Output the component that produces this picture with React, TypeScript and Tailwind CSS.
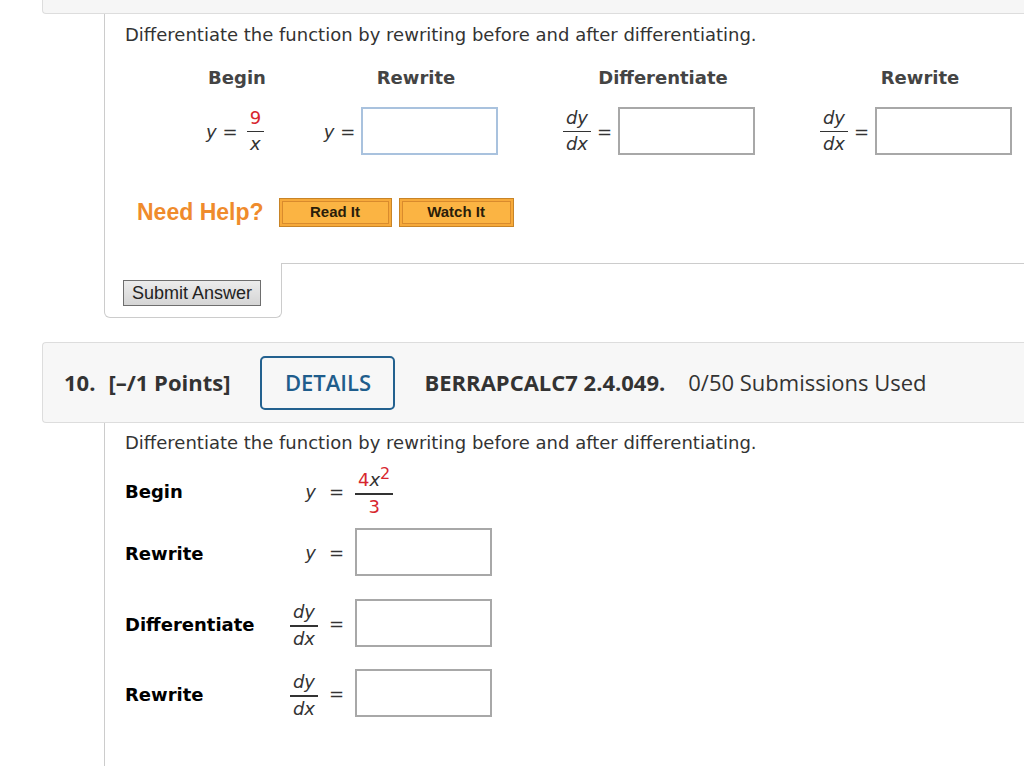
import React from 'react';

// 分数（分子・分母）
function Frac({ num, den }: { num: React.ReactNode; den: React.ReactNode }) {
  return (
    <span className="inline-flex flex-col items-center leading-[20px]">
      <span className="px-[3px] pb-[3px]">{num}</span>
      <span className="self-stretch h-[1.5px] bg-[#333]" />
      <span className="px-[3px] pt-[2px]">{den}</span>
    </span>
  );
}

const DyDx = () => <Frac num={<i>dy</i>} den={<i>dx</i>} />;

function Box({ blue = false }: { blue?: boolean }) {
  return (
    <div
      className={`w-[137px] h-[48px] bg-white border-2 ${
        blue ? 'border-[#a9c2de]' : 'border-[#a8a8a8]'
      }`}
    />
  );
}

function HelpButton({ label, width }: { label: string; width: string }) {
  return (
    <div className={`${width} h-[29px] p-[2px] bg-[#f7aa3a] border border-[#c88427]`}>
      <div className="h-full border border-[#d98b2d] bg-[#fbb443] flex items-center justify-center text-[15px] font-bold text-[#2a1d0a] font-['Liberation_Sans',Arial,sans-serif]">
        {label}
      </div>
    </div>
  );
}

export default function App() {
  return (
    <div className="w-[1024px] h-[766px] overflow-hidden bg-white text-[#333] font-['DejaVu_Sans',Verdana,sans-serif]">
      <div className="pl-[42px]">
        {/* 前の問題のヘッダー（下端のみ） */}
        <div className="h-[14px] bg-[#f6f6f6] border-l border-b border-[#dddddd] rounded-bl-[4px]" />

        {/* 問題9 本文 */}
        <div className="ml-[62px]">
          <div className="border-l border-[#cccccc] pl-[20px] pt-[10px] pb-[36px]">
            <p className="text-[18px] leading-[22px]">
              Differentiate the function by rewriting before and after differentiating.
            </p>

            <div className="ml-[26px] mt-[21px] grid grid-cols-[172px_186px_308px_206px] gap-y-[18px] text-[18px]">
              {['Begin', 'Rewrite', 'Differentiate', 'Rewrite'].map((h, i) => (
                <div key={i} className="text-center text-[18px] leading-[22px] font-bold text-[#444]">
                  {h}
                </div>
              ))}

              <div className="h-[48px] flex items-center justify-center gap-[6px] pr-[4px]">
                <i>y</i>
                <span className="mr-[3px]">=</span>
                <Frac num={<span className="text-[#d7262e]">9</span>} den={<i>x</i>} />
              </div>
              <div className="h-[48px] flex items-center justify-center gap-[6px] pr-[10px]">
                <i>y</i>
                <span>=</span>
                <Box blue />
              </div>
              <div className="h-[48px] flex items-center justify-center gap-[6px] pr-[8px]">
                <DyDx />
                <span>=</span>
                <Box />
              </div>
              <div className="h-[48px] flex items-center justify-center gap-[6px] pr-[8px]">
                <DyDx />
                <span>=</span>
                <Box />
              </div>
            </div>

            {/* ヘルプ */}
            <div className="mt-[43px] ml-[12px] flex items-center">
              <span className="text-[23px] font-bold text-[#ef8b2c] font-['Liberation_Sans',Arial,sans-serif] leading-none">
                Need Help?
              </span>
              <div className="ml-[15px] flex gap-[7px]">
                <HelpButton label="Read It" width="w-[113px]" />
                <HelpButton label="Watch It" width="w-[115px]" />
              </div>
            </div>
          </div>

          <div className="flex">
            <div className="w-[178px] h-[55px] border-l border-r border-b border-[#cccccc] rounded-b-[6px] pl-[18px] pt-[17px]">
              <button className="w-[138px] h-[26px] border border-[#6e6e6e] bg-gradient-to-b from-[#ececec] to-[#d5d5d5] text-[18px] leading-none text-[#222] font-['Liberation_Sans',Arial,sans-serif]">
                Submit Answer
              </button>
            </div>
            <div className="flex-1 border-t border-[#cccccc]" />
          </div>
        </div>

        {/* 問題10 ヘッダー */}
        <div className="mt-[24px] h-[81px] bg-[#f7f7f7] border border-r-0 border-[#dddddd] rounded-l-[4px] flex items-center pl-[21px] text-[22px] text-[#333] font-['Open_Sans',sans-serif]">
          <span className="font-bold">10.</span>
          <span className="font-bold ml-[13px]">[–/1 Points]</span>
          <span className="ml-[30px] w-[135px] h-[54px] border-2 border-[#23618f] rounded-[5px] flex items-center justify-center text-[#1f5d8c] font-semibold">
            DETAILS
          </span>
          <span className="ml-[29px] font-bold">BERRAPCALC7 2.4.049.</span>
          <span className="ml-[23px]">0/50 Submissions Used</span>
        </div>

        {/* 問題10 本文 */}
        <div className="ml-[62px] h-[400px] border-l border-[#cccccc] pl-[20px] pt-[9px]">
          <p className="text-[18px] leading-[22px]">
            Differentiate the function by rewriting before and after differentiating.
          </p>

          <div className="text-[18px]">
            <div className="mt-[12px] h-[50px] grid grid-cols-[160px_33px_37px_140px] items-center">
              <span className="text-[18px] font-bold text-black">Begin</span>
              <i className="justify-self-end pr-[2px]">y</i>
              <span className="justify-self-center">=</span>
              <span className="justify-self-start">
                <Frac
                  num={
                    <span>
                      <span className="text-[#d7262e]">4</span>
                      <i>x</i>
                      <sup className="text-[16px] text-[#d7262e] top-[-0.45em]">2</sup>
                    </span>
                  }
                  den={<span className="text-[#d7262e]">3</span>}
                />
              </span>
            </div>

            <div className="mt-[12px] h-[48px] grid grid-cols-[160px_33px_37px_140px] items-center">
              <span className="text-[18px] font-bold text-black pt-[3px]">Rewrite</span>
              <i className="justify-self-end pr-[2px]">y</i>
              <span className="justify-self-center">=</span>
              <Box />
            </div>

            <div className="mt-[22px] h-[48px] grid grid-cols-[160px_33px_37px_140px] items-center">
              <span className="text-[18px] font-bold text-black pt-[3px]">Differentiate</span>
              <span className="justify-self-end">
                <DyDx />
              </span>
              <span className="justify-self-center">=</span>
              <Box />
            </div>

            <div className="mt-[22px] h-[48px] grid grid-cols-[160px_33px_37px_140px] items-center">
              <span className="text-[18px] font-bold text-black pt-[3px]">Rewrite</span>
              <span className="justify-self-end">
                <DyDx />
              </span>
              <span className="justify-self-center">=</span>
              <Box />
            </div>
          </div>
        </div>
      </div>
    </div>
  );
}
